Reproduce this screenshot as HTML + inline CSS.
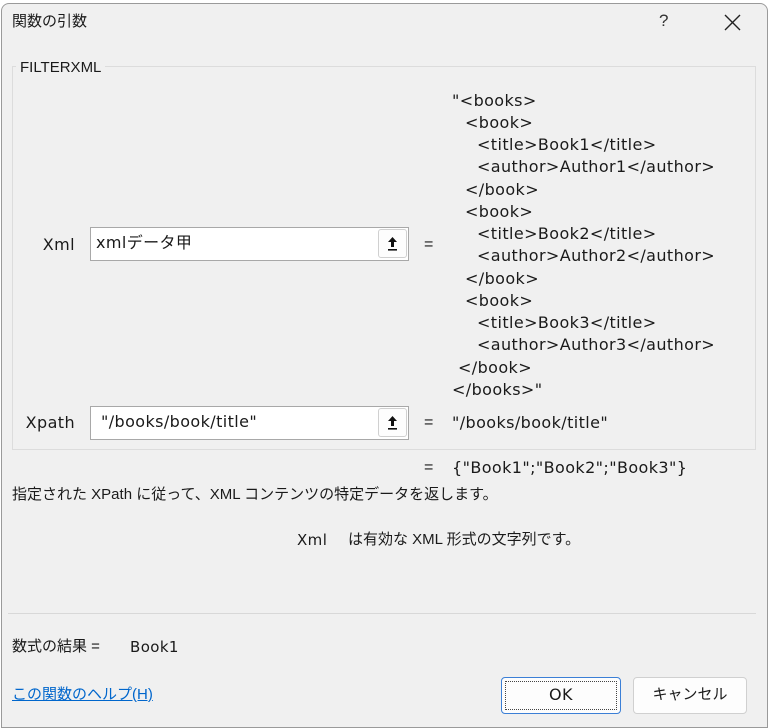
<!DOCTYPE html>
<html><head><meta charset="utf-8">
<style>
*{margin:0;padding:0;box-sizing:border-box}
body{width:768px;height:728px;background:#fff;position:relative;overflow:hidden;font-family:"Liberation Sans","Noto Sans CJK JP",sans-serif;color:#1a1a1a;font-size:16px}
.win{position:absolute;left:1px;top:3px;width:767px;height:725px;background:#f0f0f0;border:1px solid #9a9a9a;border-radius:8px 8px 0 0}
.t{position:absolute;white-space:nowrap;line-height:20px}
.d{font-family:"DejaVu Sans","Noto Sans CJK JP",sans-serif;font-size:16px;letter-spacing:0.4px}
.box{position:absolute;background:#fff;border:1px solid #a8a8a8}
.btnup{position:absolute;right:1px;top:1px;width:29px;height:29px;background:#fdfdfd;border:1px solid #d0d0d0;border-radius:3px}
.grp{position:absolute;left:12px;top:66px;width:744px;height:384px;border:1px solid #dcdcdc}
.btn{position:absolute;background:#fdfdfd;border:1px solid #d0d0d0;border-radius:4px;text-align:center;line-height:34px}
</style></head><body>
<div class="win"></div>
<div class="t" style="left:12px;top:12px;font-size:15px">関数の引数</div>
<div class="t" style="left:659px;top:11px;font-size:17px;color:#333">?</div>
<svg style="position:absolute;left:724px;top:14px" width="17" height="17"><path d="M1 1L16 16M16 1L1 16" stroke="#222" stroke-width="1.4"/></svg>
<div class="grp"></div>
<div class="t" style="left:16px;top:58px;background:#f0f0f0;padding:0 4px;font-size:15px">FILTERXML</div>

<div class="t d" style="left:452px;top:91px">"&lt;books&gt;</div>
<div class="t d" style="left:465px;top:113px">&lt;book&gt;</div>
<div class="t d" style="left:477px;top:135px">&lt;title&gt;Book1&lt;/title&gt;</div>
<div class="t d" style="left:477px;top:157px">&lt;author&gt;Author1&lt;/author&gt;</div>
<div class="t d" style="left:465px;top:180px">&lt;/book&gt;</div>
<div class="t d" style="left:465px;top:202px">&lt;book&gt;</div>
<div class="t d" style="left:477px;top:224px">&lt;title&gt;Book2&lt;/title&gt;</div>
<div class="t d" style="left:477px;top:246px">&lt;author&gt;Author2&lt;/author&gt;</div>
<div class="t d" style="left:465px;top:269px">&lt;/book&gt;</div>
<div class="t d" style="left:465px;top:291px">&lt;book&gt;</div>
<div class="t d" style="left:477px;top:313px">&lt;title&gt;Book3&lt;/title&gt;</div>
<div class="t d" style="left:477px;top:335px">&lt;author&gt;Author3&lt;/author&gt;</div>
<div class="t d" style="left:458px;top:358px">&lt;/book&gt;</div>
<div class="t d" style="left:452px;top:380px">&lt;/books&gt;"</div>

<div class="t d" style="right:693px;top:235px">Xml</div>
<div class="box" style="left:90px;top:227px;width:319px;height:34px">
 <div class="t d" style="left:5px;top:5px">xmlデータ甲</div>
 <div class="btnup"><svg width="27" height="27"><path d="M13.5 7L9 12H12V17H15V12H18Z" fill="#111"/><rect x="9" y="19" width="9" height="1.6" fill="#111"/></svg></div>
</div>
<div class="t" style="left:424px;top:235px">=</div>

<div class="t d" style="right:693px;top:413px">Xpath</div>
<div class="box" style="left:90px;top:406px;width:319px;height:34px">
 <div class="t d" style="left:10px;top:5px">"/books/book/title"</div>
 <div class="btnup"><svg width="27" height="27"><path d="M13.5 7L9 12H12V17H15V12H18Z" fill="#111"/><rect x="9" y="19" width="9" height="1.6" fill="#111"/></svg></div>
</div>
<div class="t" style="left:424px;top:413px">=</div>
<div class="t d" style="left:452px;top:413px">"/books/book/title"</div>

<div class="t" style="left:424px;top:458px">=</div>
<div class="t d" style="left:452px;top:458px">{"Book1";"Book2";"Book3"}</div>
<div class="t" style="left:12px;top:485px;font-size:15px">指定された XPath に従って、XML コンテンツの特定データを返します。</div>
<div class="t d" style="left:297px;top:530px;font-size:15px">Xml</div>
<div class="t" style="left:348px;top:530px;font-size:15px">は有効な XML 形式の文字列です。</div>
<div style="position:absolute;left:8px;top:613px;width:748px;height:1px;background:#d8d8d8"></div>
<div class="t" style="left:12px;top:637px;font-size:15px">数式の結果 =</div>
<div class="t d" style="left:130px;top:637px;font-size:15px">Book1</div>
<div class="t" style="left:12px;top:685px;font-size:15px;color:#0066cc;text-decoration:underline">この関数のヘルプ(H)</div>
<div class="btn d" style="left:501px;top:677px;width:120px;height:37px;border:1px solid #3b7fd6;">
 <div style="position:absolute;left:3px;top:3px;right:3px;bottom:3px;border:1px dotted #444"></div>OK</div>
<div class="btn" style="left:633px;top:677px;width:114px;height:37px;font-size:15px">キャンセル</div>
</body></html>
